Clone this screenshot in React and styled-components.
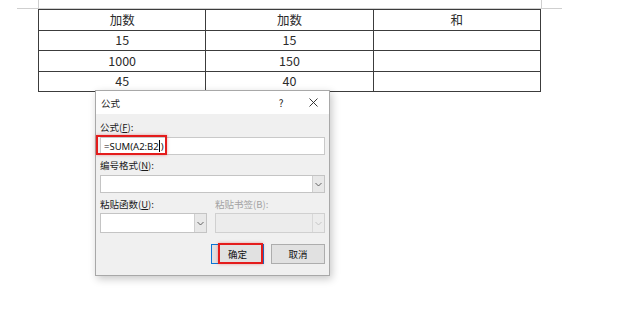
import React from "react";
import styled, { createGlobalStyle } from "styled-components";

const GlobalStyle = createGlobalStyle`
  html, body { margin: 0; padding: 0; background: #ffffff; }
  body { font-family: "Noto Sans CJK SC", "Noto Sans", sans-serif; }
  * { box-sizing: border-box; }
`;

const Page = styled.div`
  position: relative;
  width: 620px;
  height: 309px;
  overflow: hidden;
  background: #fff;
`;

const PageEdge = styled.div`
  margin-left: 17px;
  width: 545px;
  height: 9px;
  border-bottom: 1px solid #cfcfcf;
`;

const CornerMarks = styled.div`
  margin-left: 21px;
  width: 504px;
  height: 100%;
  border-left: 1px solid #cfcfcf;
  border-right: 1px solid #cfcfcf;
`;

const Table = styled.table`
  margin-left: 38px;
  width: 503px;
  border-collapse: collapse;
  table-layout: fixed;
  color: #2b2b2b;
  font-size: 12.5px;
`;

const Row = styled.tr`
  height: 20.5px;
`;

const Cell = styled.td`
  border: 1px solid #3c3c3c;
  padding: 0;
  text-align: center;
  line-height: 18px;
  vertical-align: middle;
`;

const Dialog = styled.div`
  position: absolute;
  left: 95px;
  top: 90px;
  width: 235px;
  height: 186px;
  border: 1px solid #a8a8a8;
  background: #f0f0f0;
  box-shadow: 2px 3px 8px rgba(0, 0, 0, 0.22);
  display: flex;
  flex-direction: column;
  font-size: 9.5px;
  color: #1a1a1a;
`;

const TitleBar = styled.div`
  height: 23px;
  background: #ffffff;
  display: flex;
  align-items: center;
  padding-left: 5px;
`;

const Title = styled.div`
  flex: 1;
  font-size: 9.5px;
`;

const TitleButton = styled.div`
  width: 32px;
  height: 23px;
  display: flex;
  align-items: center;
  justify-content: center;
  font-size: 10px;
  color: #222;
`;

const Body = styled.div`
  flex: 1;
  padding: 7px 4px 0 4px;
  display: flex;
  flex-direction: column;
`;

const Label = styled.div`
  height: 12px;
  line-height: 12px;
  margin-top: ${(p) => p.$top || 0}px;
  margin-bottom: ${(p) => p.$bottom || 0}px;
  color: ${(p) => (p.$disabled ? "#a3a3a3" : "#1a1a1a")};
  white-space: nowrap;
`;

const Key = styled.span`
  text-decoration: underline;
`;

const InputWrap = styled.div`
  position: relative;
  height: 18px;
  background: #fff;
  border: 1px solid #c9c9c9;
  display: flex;
  align-items: center;
  padding-left: 3px;
  font-family: "Noto Sans", "Noto Sans CJK SC", sans-serif;
  font-size: 9.5px;
  color: #111;
`;

const Caret = styled.span`
  display: inline-block;
  width: 1px;
  height: 12px;
  background: #000;
  vertical-align: middle;
  margin: 0 0.5px;
`;

const Highlight = styled.div`
  position: absolute;
  left: ${(p) => p.$x}px;
  top: ${(p) => p.$y}px;
  width: ${(p) => p.$w}px;
  height: ${(p) => p.$h}px;
  border: 2px solid #e41c1c;
  box-shadow: 0 0 3px rgba(200, 0, 0, 0.35);
  pointer-events: none;
`;

const Select = styled.div`
  height: ${(p) => p.$h}px;
  background: ${(p) => (p.$disabled ? "#ececec" : "#fff")};
  border: 1px solid ${(p) => (p.$disabled ? "#d0d0d0" : "#c4c4c4")};
  display: flex;
  justify-content: flex-end;
`;

const Arrow = styled.div`
  width: 12px;
  height: 100%;
  background: ${(p) => (p.$disabled ? "#ececec" : "#e8e8e8")};
  border-left: 1px solid ${(p) => (p.$disabled ? "#d8d8d8" : "#cfcfcf")};
  display: flex;
  align-items: center;
  justify-content: center;
`;

const PairRow = styled.div`
  display: grid;
  grid-template-columns: 107px 1fr;
  column-gap: 8px;
`;

const Buttons = styled.div`
  margin-top: 11px;
  display: flex;
  justify-content: flex-end;
  gap: 7px;
`;

const Button = styled.div`
  position: relative;
  width: ${(p) => p.$w}px;
  height: 20px;
  background: #e1e1e1;
  border: 1px solid ${(p) => (p.$focus ? "#0a74d6" : "#adadad")};
  display: flex;
  align-items: center;
  justify-content: center;
  font-size: 9.5px;
  color: #111;
`;

function Chevron({ disabled }) {
  return (
    <svg width="7" height="5" viewBox="0 0 7 5">
      <path d="M0.5 1 L3.5 4 L6.5 1" fill="none" stroke={disabled ? "#c2c2c2" : "#555"} strokeWidth="0.9" />
    </svg>
  );
}

function CloseIcon() {
  return (
    <svg width="9" height="9" viewBox="0 0 9 9">
      <path d="M0.5 0.5 L8.5 8.5 M8.5 0.5 L0.5 8.5" stroke="#222" strokeWidth="0.9" />
    </svg>
  );
}

const rows = [
  ["加数", "加数", "和"],
  ["15", "15", ""],
  ["1000", "150", ""],
  ["45", "40", ""],
];

export default function App() {
  return (
    <Page>
      <GlobalStyle />
      <PageEdge>
        <CornerMarks />
      </PageEdge>
      <Table>
        <tbody>
          {rows.map((r, i) => (
            <Row key={i}>
              {r.map((c, j) => (
                <Cell key={j}>{c}</Cell>
              ))}
            </Row>
          ))}
        </tbody>
      </Table>

      <Dialog>
        <TitleBar>
          <Title>公式</Title>
          <TitleButton>?</TitleButton>
          <TitleButton>
            <CloseIcon />
          </TitleButton>
        </TitleBar>
        <Body>
          <Label $bottom={4}>
            公式(<Key>F</Key>):
          </Label>
          <InputWrap>
            <span>=SUM(A2:B2</span>
            <Caret />
            <span>)</span>
            <Highlight $x={-5} $y={-3} $w={71} $h={20} />
          </InputWrap>
          <Label $top={4} $bottom={4}>
            编号格式(<Key>N</Key>):
          </Label>
          <Select $h={18}>
            <Arrow>
              <Chevron />
            </Arrow>
          </Select>
          <PairRow>
            <Label $top={5} $bottom={3}>
              粘贴函数(<Key>U</Key>):
            </Label>
            <Label $top={5} $bottom={3} $disabled>
              粘贴书签(B):
            </Label>
            <Select $h={20}>
              <Arrow>
                <Chevron />
              </Arrow>
            </Select>
            <Select $h={20} $disabled>
              <Arrow $disabled>
                <Chevron disabled />
              </Arrow>
            </Select>
          </PairRow>
          <Buttons>
            <Button $w={53} $focus>
              确定
              <Highlight $x={6} $y={-2} $w={45} $h={21} />
            </Button>
            <Button $w={54}>取消</Button>
          </Buttons>
        </Body>
      </Dialog>
    </Page>
  );
}
